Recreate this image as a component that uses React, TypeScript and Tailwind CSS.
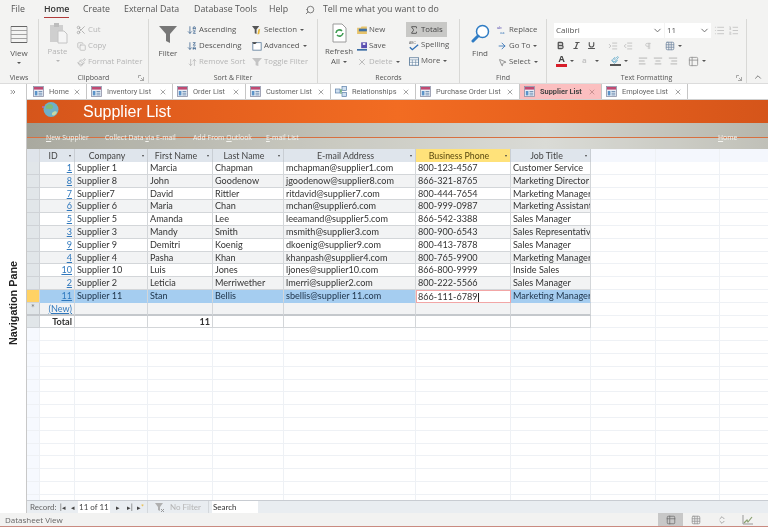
import React from "react";
import {
  ArrowDownAZ, ArrowDownZA, ArrowDownUp, Bold, ChevronDown, ChevronUp, ChevronsRight, Copy, Italic, MousePointer2,
  Scissors, Search, Underline, X, Paintbrush, ArrowRight, AlignLeft, AlignCenter, AlignRight, List, ListOrdered, Sigma,
  IndentIncrease, IndentDecrease, Pilcrow, Grid3x3, Table2, ChevronsUpDown,
} from "lucide-react";

const MENU = [
  { t: "File", w: "w-[33px]" },
  { t: "Home", w: "w-[39px]", active: true },
  { t: "Create", w: "w-[41px]" },
  { t: "External Data", w: "w-[70px]" },
  { t: "Database Tools", w: "w-[75px]" },
  { t: "Help", w: "w-[37px]" },
];

const TABS = [
  { t: "Home", w: "w-[58px]" },
  { t: "Inventory List", w: "w-[86px]" },
  { t: "Order List", w: "w-[73px]" },
  { t: "Customer List", w: "w-[85px]" },
  { t: "Relationships", w: "w-[85px]", rel: true },
  { t: "Purchase Order List", w: "w-[104px]" },
  { t: "Supplier List", w: "w-[82px]", active: true },
  { t: "Employee List", w: "w-[86px]" },
];

const ROWS = [
  ["1", "Supplier 1", "Marcia", "Chapman", "mchapman@supplier1.com", "800-123-4567", "Customer Service"],
  ["8", "Supplier 8", "John", "Goodenow", "jgoodenow@supplier8.com", "866-321-8765", "Marketing Director"],
  ["7", "Supplier7", "David", "Rittler", "ritdavid@supplier7.com", "800-444-7654", "Marketing Manager"],
  ["6", "Supplier 6", "Maria", "Chan", "mchan@supplier6.com", "800-999-0987", "Marketing Assistant"],
  ["5", "Supplier 5", "Amanda", "Lee", "leeamand@supplier5.com", "866-542-3388", "Sales Manager"],
  ["3", "Supplier 3", "Mandy", "Smith", "msmith@supplier3.com", "800-900-6543", "Sales Representative"],
  ["9", "Supplier 9", "Demitri", "Koenig", "dkoenig@supplier9.com", "800-413-7878", "Sales Manager"],
  ["4", "Supplier 4", "Pasha", "Khan", "khanpash@supplier4.com", "800-765-9900", "Marketing Manager"],
  ["10", "Supplier 10", "Luis", "Jones", "ljones@supplier10.com", "866-800-9999", "Inside Sales"],
  ["2", "Supplier 2", "Leticia", "Merriwether", "lmerri@supplier2.com", "800-222-5566", "Sales Manager"],
  ["11", "Supplier 11", "Stan", "Bellis", "sbellis@supplier 11.com", "866-111-6789", "Marketing Manager"],
];

const GRID = "grid grid-cols-[13px_35px_73px_65px_71px_132px_95px_80px_65px_64px_64px]";
const CELL = "border-r border-b border-[#d3d6d9] px-[2px] overflow-hidden whitespace-nowrap leading-[12px]";
const BLANK = "border-r border-b border-[#eef1f5]";

function FormIcon({ rel }: { rel?: boolean }) {
  if (rel) {
    return (
      <svg width="12" height="11" viewBox="0 0 12 11" className="shrink-0">
        <rect x="7" y="0.5" width="4.5" height="4" fill="#cfe0f0" stroke="#5b7fa8" strokeWidth="0.7" />
        <rect x="0.5" y="3" width="4.5" height="4" fill="#cfe0f0" stroke="#5b7fa8" strokeWidth="0.7" />
        <rect x="7" y="6.5" width="4.5" height="4" fill="#cfe0f0" stroke="#5b7fa8" strokeWidth="0.7" />
        <path d="M5 5h2M6 3v5" stroke="#4a9a55" strokeWidth="0.8" />
      </svg>
    );
  }
  return (
    <svg width="11" height="11" viewBox="0 0 11 11" className="shrink-0">
      <rect x="0.5" y="0.5" width="10" height="10" fill="#e8eef6" stroke="#8d8fa6" strokeWidth="0.8" />
      <rect x="1" y="1" width="9" height="2.6" fill="#c04a72" />
      <rect x="1.8" y="5" width="2.6" height="4.4" fill="#5b93c9" />
      <path d="M5.5 5.5h3.8M5.5 7.2h3.8M5.5 8.9h3.8" stroke="#5b7fa8" strokeWidth="0.8" />
    </svg>
  );
}

function Group({ label, w, launcher, children }: { label: string; w: string; launcher?: boolean; children: React.ReactNode }) {
  return (
    <div className={`${w} h-full flex flex-col border-r border-[#d8d8d6] relative`}>
      <div className="flex-1 flex min-h-0 pt-[3px]">{children}</div>
      <div className="h-[12px] leading-[13px] text-center text-[7px] text-[#555]">{label}</div>
      {launcher && (
        <svg width="6" height="6" viewBox="0 0 6 6" className="absolute right-[4px] bottom-[2px]">
          <path d="M0.5 3V.5H3M5.5 2v3.5H2M3 3l2.5 2.5" fill="none" stroke="#888" strokeWidth="0.7" />
        </svg>
      )}
    </div>
  );
}

function Item({ icon, label, dim, w }: { icon: React.ReactNode; label: string; dim?: boolean; w?: string }) {
  return (
    <div className={`h-[16px] flex items-center whitespace-nowrap ${w ?? ""} ${dim ? "text-[#b5b5b5]" : "text-[#555]"}`}>
      <span className="w-[12px] h-[12px] pr-[2px] flex items-center justify-center shrink-0">{icon}</span>
      <span>{label}</span>
    </div>
  );
}

function Caret() {
  return <span className="inline-block ml-[3px] w-0 h-0 border-x-[2px] border-x-transparent border-t-[2px] border-t-[#555] align-middle" />;
}

function Ribbon() {
  return (
    <div className="h-[65px] bg-[#f3f3f2] flex text-[7.8px] [font-family:'Open_Sans',sans-serif] border-b border-[#dcdcdc]">
      <Group label="Views" w="w-[39px]">
        <div className="w-full flex flex-col items-center text-[#555]">
          <svg width="18" height="19" viewBox="0 0 18 19" className="mt-[3px]">
            <path d="M1 1.5h16v16H1zM1 5.5h16M1 9.5h16M1 13.5h16" fill="none" stroke="#9a9a9a" strokeWidth="0.9" />
            <path d="M1 1.5h16M1 17.5h16" stroke="#666" strokeWidth="1.2" />
          </svg>
          <span className="mt-[4px] text-[8px] leading-[10px]">View</span>
          <span className="w-0 h-0 mt-[4px] border-x-[2px] border-x-transparent border-t-[2px] border-t-[#555]" />
        </div>
      </Group>

      <Group label="Clipboard" w="w-[110px]" launcher>
        <div className="w-[37px] flex flex-col items-center text-[#b5b5b5]">
          <svg width="20" height="22" viewBox="0 0 20 22" className="ml-[2px]">
            <rect x="1" y="3" width="13" height="17" fill="#cfcfcf" />
            <rect x="5" y="1" width="5" height="4" fill="#bdbdbd" />
            <path d="M9 9h6l3 3v9H9z" fill="#f5f5f5" stroke="#c4c4c4" />
          </svg>
          <span className="mt-[2px] leading-[10px]">Paste</span>
          <span className="w-0 h-0 mt-[4px] border-x-[2px] border-x-transparent border-t-[2px] border-t-[#b5b5b5]" />
        </div>
        <div className="flex flex-col">
          <Item dim label="Cut" icon={<Scissors size={10} color="#a8a8a8" />} />
          <Item dim label="Copy" icon={<Copy size={9} color="#b5b5b5" />} />
          <Item dim label="Format Painter" icon={<Paintbrush size={9} color="#b5b5b5" />} />
        </div>
      </Group>

      <Group label="Sort & Filter" w="w-[169px]">
        <div className="w-[38px] flex flex-col items-center text-[#555]">
          <svg width="20" height="20" viewBox="0 0 20 20" className="mt-[2px]">
            <path d="M1 2h18l-7 8v9l-4-2v-7z" fill="#777" />
          </svg>
          <span className="mt-[4px] text-[8px] leading-[10px]">Filter</span>
        </div>
        <div className="flex flex-col w-[65px]">
          <Item label="Ascending" icon={<ArrowDownAZ size={10} color="#4a6f96" />} />
          <Item label="Descending" icon={<ArrowDownZA size={10} color="#4a6f96" />} />
          <Item dim label="Remove Sort" icon={<ArrowDownUp size={9} color="#b5b5b5" />} />
        </div>
        <div className="flex flex-col">
          <div className="flex items-center">
            <Item label="Selection" icon={<svg width="10" height="10" viewBox="0 0 11 11"><path d="M0 1h8L5 5v5L3 9V5z" fill="#555" /><path d="M7 5l2-1-1 6-2 .5z" fill="#e8b83a" /></svg>} />
            <Caret />
          </div>
          <div className="flex items-center">
            <Item label="Advanced" icon={<svg width="10" height="10" viewBox="0 0 12 11"><rect x="1" y="1.5" width="10" height="9" fill="#fff" stroke="#5d7d9c" /><path d="M0 1h6L4 3H2z" fill="#444" /></svg>} />
            <Caret />
          </div>
          <Item dim label="Toggle Filter" icon={<svg width="10" height="10" viewBox="0 0 11 11"><path d="M0 1h11L7 5.5V10L4 9V5.5z" fill="#c4c4c4" /></svg>} />
        </div>
      </Group>

      <Group label="Records" w="w-[142px]">
        <div className="w-[39px] pl-[3px] flex flex-col items-center text-[#555] leading-[10px]">
          <svg width="15" height="20" viewBox="0 0 15 20" className="mt-[1px]">
            <path d="M1 1h9l4 4v14H1z" fill="#fff" stroke="#9a9a9a" />
            <path d="M4 10a3.5 3.5 0 0 1 6-2M11 10a3.5 3.5 0 0 1-6 2" fill="none" stroke="#3f9b52" strokeWidth="1.6" />
          </svg>
          <span className="mt-[3px]">Refresh</span>
          <span>All<Caret /></span>
        </div>
        <div className="flex flex-col w-[49px]">
          <Item label="New" icon={<svg width="10" height="8" viewBox="0 0 11 9"><path d="M0 2h4l1-1.5h6V9H0z" fill="#e7c36b" /><rect x="2" y="3" width="9" height="3" fill="#3d6fa5" /></svg>} />
          <Item label="Save" icon={<svg width="10" height="9" viewBox="0 0 12 10"><rect x="5" y="0" width="7" height="7" fill="#5a4fb0" /><rect x="7" y="1" width="3" height="2" fill="#fff" /><path d="M0 9h12" stroke="#3d6fa5" strokeWidth="2" /></svg>} />
          <div className="flex items-center">
            <Item dim label="Delete" icon={<X size={10} color="#b0b0b0" />} />
            <Caret />
          </div>
        </div>
        <div className="flex flex-col">
          <div className="h-[15px] w-[41px] flex items-center bg-[#c8c8c6] text-[#444] pl-[3px]">
            <span className="w-[12px]"><Sigma size={10} color="#444" /></span>
            <span>Totals</span>
          </div>
          <div className="h-[16px] pl-[3px]">
            <Item label="Spelling" icon={<svg width="10" height="11" viewBox="0 0 12 12"><text x="0" y="4" fontSize="4" fill="#666" fontFamily="Liberation Sans">ABC</text><path d="M1 8l3 3 7-6" fill="none" stroke="#2f6fb5" strokeWidth="1.6" /></svg>} />
          </div>
          <div className="flex items-center pl-[3px] h-[16px]">
            <Item label="More" icon={<svg width="10" height="9" viewBox="0 0 12 10"><rect x="0.5" y="0.5" width="11" height="9" fill="#fff" stroke="#5d7d9c" /><path d="M0 3h12M4 3v7M8 3v7M0 6h12" stroke="#5d7d9c" strokeWidth="0.7" /></svg>} />
            <Caret />
          </div>
        </div>
      </Group>

      <Group label="Find" w="w-[87px]">
        <div className="w-[37px] pl-[3px] flex flex-col items-center text-[#555]">
          <svg width="19" height="20" viewBox="0 0 19 20" className="mt-[2px]">
            <circle cx="11.5" cy="7.5" r="6" fill="#fff" stroke="#2f7cc4" strokeWidth="1.5" />
            <path d="M7 12l-5 5" stroke="#2f7cc4" strokeWidth="3" strokeLinecap="round" />
          </svg>
          <span className="mt-[4px] text-[8px] leading-[10px]">Find</span>
        </div>
        <div className="flex flex-col">
          <Item label="Replace" icon={<svg width="10" height="10" viewBox="0 0 12 11"><text x="0" y="4.5" fontSize="5" fill="#5a4fb0" fontFamily="Liberation Sans">ab</text><text x="4" y="10" fontSize="5" fill="#2f6fb5" fontFamily="Liberation Sans">ac</text></svg>} />
          <div className="flex items-center">
            <Item label="Go To" icon={<ArrowRight size={10} color="#2f6fb5" />} />
            <Caret />
          </div>
          <div className="flex items-center">
            <Item label="Select" icon={<MousePointer2 size={9} color="#777" />} />
            <Caret />
          </div>
        </div>
      </Group>

      <Group label="Text Formatting" w="w-[200px]" launcher>
        <div className="flex flex-col pl-[7px] w-full">
          <div className="flex items-center h-[16px]">
            <div className="w-[110px] h-[15px] bg-white flex items-center justify-between pl-[2px] pr-[1px] text-[8px] text-[#555]">
              Calibri <ChevronDown size={11} color="#666" />
            </div>
            <div className="ml-[1px] w-[46px] h-[15px] bg-white flex items-center justify-between pl-[2px] pr-[1px] text-[8px] text-[#555]">
              11 <ChevronDown size={11} color="#666" />
            </div>
            <div className="ml-[3px] flex gap-[3px]">
              <List size={11} color="#c4c4c4" />
              <ListOrdered size={11} color="#c4c4c4" />
            </div>
          </div>
          <div className="flex items-center h-[15px] pl-[2px]">
            <Bold size={9} color="#555" strokeWidth={3.4} />
            <Italic size={9} color="#555" strokeWidth={3.2} className="ml-[7px]" />
            <Underline size={9} color="#555" strokeWidth={3} className="ml-[6px]" />
            <IndentIncrease size={10} color="#bbb" className="ml-[12px]" />
            <IndentDecrease size={10} color="#bbb" className="ml-[5px]" />
            <Pilcrow size={8} color="#bbb" className="ml-[11px]" />
            <span className="w-[13px]" />
            <Grid3x3 size={10} color="#7a8ea6" />
            <Caret />
          </div>
          <div className="flex items-center h-[16px] pl-[2px]">
            <span className="w-[11px] flex flex-col items-center leading-[8px] text-[#444] text-[9px] font-bold">
              A
              <span className="w-[11px] h-[2.5px] bg-[#d81e2a] mt-[1px]" />
            </span>
            <Caret />
            <span className="w-[10px] ml-[8px] text-[#c4c4c4] font-bold">a</span>
            <Caret />
            <span className="ml-[10px] w-[12px] flex flex-col items-center">
              <Paintbrush size={8} color="#4a9ec4" />
              <span className="w-[11px] h-[2px] bg-[#555]" />
            </span>
            <Caret />
            <AlignLeft size={10} color="#aaa" className="ml-[10px]" />
            <AlignCenter size={10} color="#aaa" className="ml-[5px]" />
            <AlignRight size={10} color="#aaa" className="ml-[5px]" />
            <Table2 size={11} color="#999" className="ml-[10px]" />
            <Caret />
          </div>
        </div>
      </Group>
      <div className="flex-1 flex items-end justify-center pb-[1px]">
        <ChevronUp size={10} color="#666" />
      </div>
    </div>
  );
}

function Tabs() {
  return (
    <div className="h-[16px] flex bg-white border-b border-[#cfcfcf] pl-[29px] text-[7.4px] [font-family:'Roboto',sans-serif]">
      {TABS.map((t) => (
        <div
          key={t.t}
          className={`${t.w} flex items-center pl-[4px] pr-[5px] border-r border-[#c6c6c6] ${t.active ? "bg-[#fbbfc0] text-[#444] font-bold" : "text-[#666]"}`}
        >
          <FormIcon rel={t.rel} />
          <span className="ml-[5px] flex-1 whitespace-nowrap overflow-hidden">{t.t}</span>
          <X size={8} color={t.active ? "#b07a7a" : "#777"} />
        </div>
      ))}
    </div>
  );
}

function Header() {
  const heads = ["ID", "Company", "First Name", "Last Name", "E-mail Address", "Business Phone", "Job Title"];
  return (
    <div className={`${GRID} h-[13px] text-[8.8px] text-[#444]`}>
      <div className="bg-[#dfe4ea] border-r border-[#d3d6d9]" />
      {heads.map((h) => (
        <div
          key={h}
          className={`relative flex items-center justify-center pr-[8px] border-r border-[#c9ced4] leading-[12px] ${h === "Business Phone" ? "bg-[#ffe27a] text-[#5b4a10]" : "bg-[#dfe5ec]"}`}
        >
          {h}
          <span className="absolute right-[3px] top-[6px] w-0 h-0 border-x-[1.5px] border-x-transparent border-t-[2px] border-t-[#444]" />
        </div>
      ))}
      <div className="bg-[#f4f7fd] border-r border-[#eef1f5]" />
      <div className="bg-[#f4f7fd] border-r border-[#eef1f5]" />
      <div className="bg-[#f4f7fd]" />
    </div>
  );
}

function Blanks() {
  return (
    <>
      <div className={BLANK} />
      <div className={BLANK} />
      <div className={BLANK} />
    </>
  );
}

function Sheet() {
  return (
    <div className="flex-1 min-h-0 overflow-hidden bg-white text-[9.1px] text-[#333] [font-family:'Lato','Liberation_Sans',sans-serif]">
      <Header />
      {ROWS.map((r, i) => {
        const sel = r[0] === "11";
        const bg = sel ? "bg-[#a5cdf0] text-[#1d3248] border-b-[#a5cdf0]" : i % 2 === 1 ? "bg-[#f2f3f4]" : "bg-white";
        return (
          <div key={r[0]} className={`${GRID} h-[12.8px]`}>
            <div className={`${sel ? "bg-[#ffd264]" : "bg-[#e1e6e9]"} border-r border-b border-[#cfd3d7]`} />
            <div className={`${CELL} ${bg} text-right text-[#2f78bd] underline`}>{r[0]}</div>
            <div className={`${CELL} ${bg}`}>{r[1]}</div>
            <div className={`${CELL} ${bg}`}>{r[2]}</div>
            <div className={`${CELL} ${bg}`}>{r[3]}</div>
            <div className={`${CELL} ${bg}`}>{r[4]}</div>
            {sel ? (
              <div className="border border-[#f2a6a6] bg-white px-[1px] leading-[11px] overflow-hidden whitespace-nowrap">
                {r[5]}
                <span className="inline-block w-px h-[9px] bg-[#222] align-middle" />
              </div>
            ) : (
              <div className={`${CELL} ${bg}`}>{r[5]}</div>
            )}
            <div className={`${CELL} ${bg}`}>{r[6]}</div>
            <Blanks />
          </div>
        );
      })}
      <div className={`${GRID} h-[12.8px]`}>
        <div className="bg-[#e1e6e9] border-r border-b-2 border-[#c4c8cc] text-center text-[#777] leading-[10px]">*</div>
        <div className={`${CELL} bg-[#f2f3f4] border-b-2 border-b-[#c4c8cc] text-right text-[#2f78bd] underline`}>(New)</div>
        {[0, 1, 2, 3, 4, 5].map((k) => (
          <div key={k} className={`${CELL} bg-[#f2f3f4] border-b-2 border-b-[#c4c8cc]`} />
        ))}
        <Blanks />
      </div>
      <div className={`${GRID} h-[12.8px]`}>
        <div className="bg-[#e1e6e9] border-r border-b border-[#cfd3d7]" />
        <div className={`${CELL} bg-white text-right font-bold`}>Total</div>
        <div className={`${CELL} bg-white`} />
        <div className={`${CELL} bg-white text-right font-bold`}>11</div>
        {[0, 1, 2, 3].map((k) => (
          <div key={k} className={`${CELL} bg-white`} />
        ))}
        <Blanks />
      </div>
      {Array.from({ length: 14 }).map((_, i) => (
        <div key={i} className={`${GRID} h-[12.8px]`}>
          <div className={`${BLANK} bg-[#f6f9fe]`} />
          {[0, 1, 2, 3, 4, 5, 6].map((k) => (
            <div key={k} className={BLANK} />
          ))}
          <Blanks />
        </div>
      ))}
    </div>
  );
}

function RecordBar() {
  const nav = "text-[#444] text-[7px] leading-none";
  return (
    <div className="h-[13px] flex items-center bg-[#e9edf1] border-t border-[#c8ccd2] text-[8px] text-[#666] [font-family:'Lato',sans-serif]">
      <span className="ml-[3px] w-[30px]">Record:</span>
      <span className={`${nav} w-[11px]`}>|◂</span>
      <span className={`${nav} w-[7px]`}>◂</span>
      <span className="h-[12px] w-[32px] bg-white leading-[12px] text-[#444] pl-[1px]">11 of 11</span>
      <span className={`${nav} ml-[6px] w-[11px]`}>▸</span>
      <span className={`${nav} w-[10px]`}>▸|</span>
      <span className={`${nav} w-[10px]`}>▸<span className="text-[#e8b83a]">*</span></span>
      <span className="flex items-center border-l border-r border-[#d4d8dc] pl-[7px] w-[62px] text-[#b5b5b5]">
        <svg width="10" height="10" viewBox="0 0 10 10" className="mr-[5px]"><path d="M0 1h8L5 5v4L3 8V5z" fill="#b0b0b0" /><path d="M6 7l3 3M9 7l-3 3" stroke="#999" /></svg>
        No Filter
      </span>
      <span className="ml-[3px] h-[12px] w-[46px] bg-white text-[#333] leading-[12px] pl-[1px]">Search</span>
    </div>
  );
}

function StatusBar() {
  return (
    <div className="h-[14px] flex items-center justify-between bg-[#f2f2f1] border-b border-[#c98a80] text-[8px] text-[#666] [font-family:'Open_Sans',sans-serif] pl-[5px] pr-[8px]">
      <span>Datasheet View</span>
      <div className="flex h-full items-center">
        <span className="w-[25px] h-full bg-[#c8c8c8] flex items-center justify-center"><Table2 size={10} color="#777" /></span>
        <span className="w-[26px] flex justify-center"><Grid3x3 size={10} color="#999" /></span>
        <span className="w-[26px] flex justify-center"><ChevronsUpDown size={10} color="#999" /></span>
        <span className="w-[25px] flex justify-center"><svg width="11" height="10" viewBox="0 0 11 10"><path d="M1 0v9h10" fill="none" stroke="#999" /><path d="M2 8l3-3 1 2 4-5" fill="none" stroke="#8aa070" strokeWidth="1.2" /></svg></span>
      </div>
    </div>
  );
}

export default function App() {
  return (
    <div className="w-[768px] h-[527px] overflow-hidden flex flex-col bg-white blur-[0.35px]">
      <div className="h-[19px] bg-[#f3f3f2] flex items-center pl-[11px] text-[8.8px] text-[#555] [font-family:'Open_Sans',sans-serif]">
        {MENU.map((m) => (
          <div key={m.t} className={`${m.w} h-full leading-[18px] relative ${m.active ? "text-[#333] font-semibold" : ""}`}>
            {m.t}
            {m.active && <span className="absolute left-0 w-[25px] bottom-[1px] h-[1.5px] bg-[#b03a3a]" />}
          </div>
        ))}
        <Search size={10} color="#666" className="ml-[-1px] -scale-x-100" />
        <span className="ml-[8px]">Tell me what you want to do</span>
      </div>
      <Ribbon />
      <div className="flex-1 min-h-0 flex flex-col">
        <Tabs />
        <div className="flex-1 min-h-0 flex">
          <div className="w-[27px] -mt-[16px] flex flex-col bg-white border-r border-[#c8c8c8] relative">
            <div className="h-[16px] flex items-center justify-center bg-white">
              <ChevronsRight size={8} color="#555" />
            </div>
            <div className="pt-[161px] flex justify-center">
              <span className="[writing-mode:vertical-rl] rotate-180 font-bold text-[10.8px] text-[#222] [font-family:'Liberation_Sans',sans-serif] leading-none">Navigation Pane</span>
            </div>
          </div>
          <div className="flex-1 min-w-0 flex flex-col">
            <div className="h-[23px] bg-[linear-gradient(90deg,#d5551b,#e5601e_25%,#f26c22_50%,#e65f1d_75%,#d5551a_100%)] flex items-center">
              <svg width="20" height="18" viewBox="0 0 20 18" className="ml-[14px] -mt-[4px]">
                <circle cx="10" cy="8.5" r="7.5" fill="#6fb0c8" />
                <path d="M5 5c3-3 6-2 7 0s-2 4-4 3-4 1-3-3z" fill="#7fbb7a" />
                <path d="M11 12c2-2 4-2 5-1-1 3-3 4-5 3z" fill="#c5d8a8" />
                <circle cx="2" cy="6" r="1" fill="#b06ac0" />
              </svg>
              <span className="ml-[22px] text-[16px] text-white [font-family:'Liberation_Sans',sans-serif] leading-none">Supplier List</span>
            </div>
            <div className="relative h-[26px] bg-[linear-gradient(90deg,#9b9b8f,#c0c0b6_40%,#d4d5cf_70%,#b6b6ac_100%)] text-[6.9px] text-[#f4f4f0] [font-family:'Open_Sans',sans-serif]">
              <span className="absolute left-0 right-0 top-[14px] h-px bg-[#d77040]" />
              <span className="absolute left-0 right-0 top-[15px] bottom-0 bg-white/15" />
              <div className="relative flex h-full items-center pt-[4px] pl-[19px] whitespace-nowrap">
                <span className="w-[59px]"><u>N</u>ew Supplier</span>
                <span className="w-[88px]">Collect Data <u>v</u>ia E-mail</span>
                <span className="w-[73px]">Add From <u>O</u>utlook</span>
                <span className="w-[452px]"><u>E</u>-mail List</span>
                <span><u>H</u>ome</span>
              </div>
            </div>
            <Sheet />
            <RecordBar />
          </div>
        </div>
      </div>
      <StatusBar />
    </div>
  );
}
